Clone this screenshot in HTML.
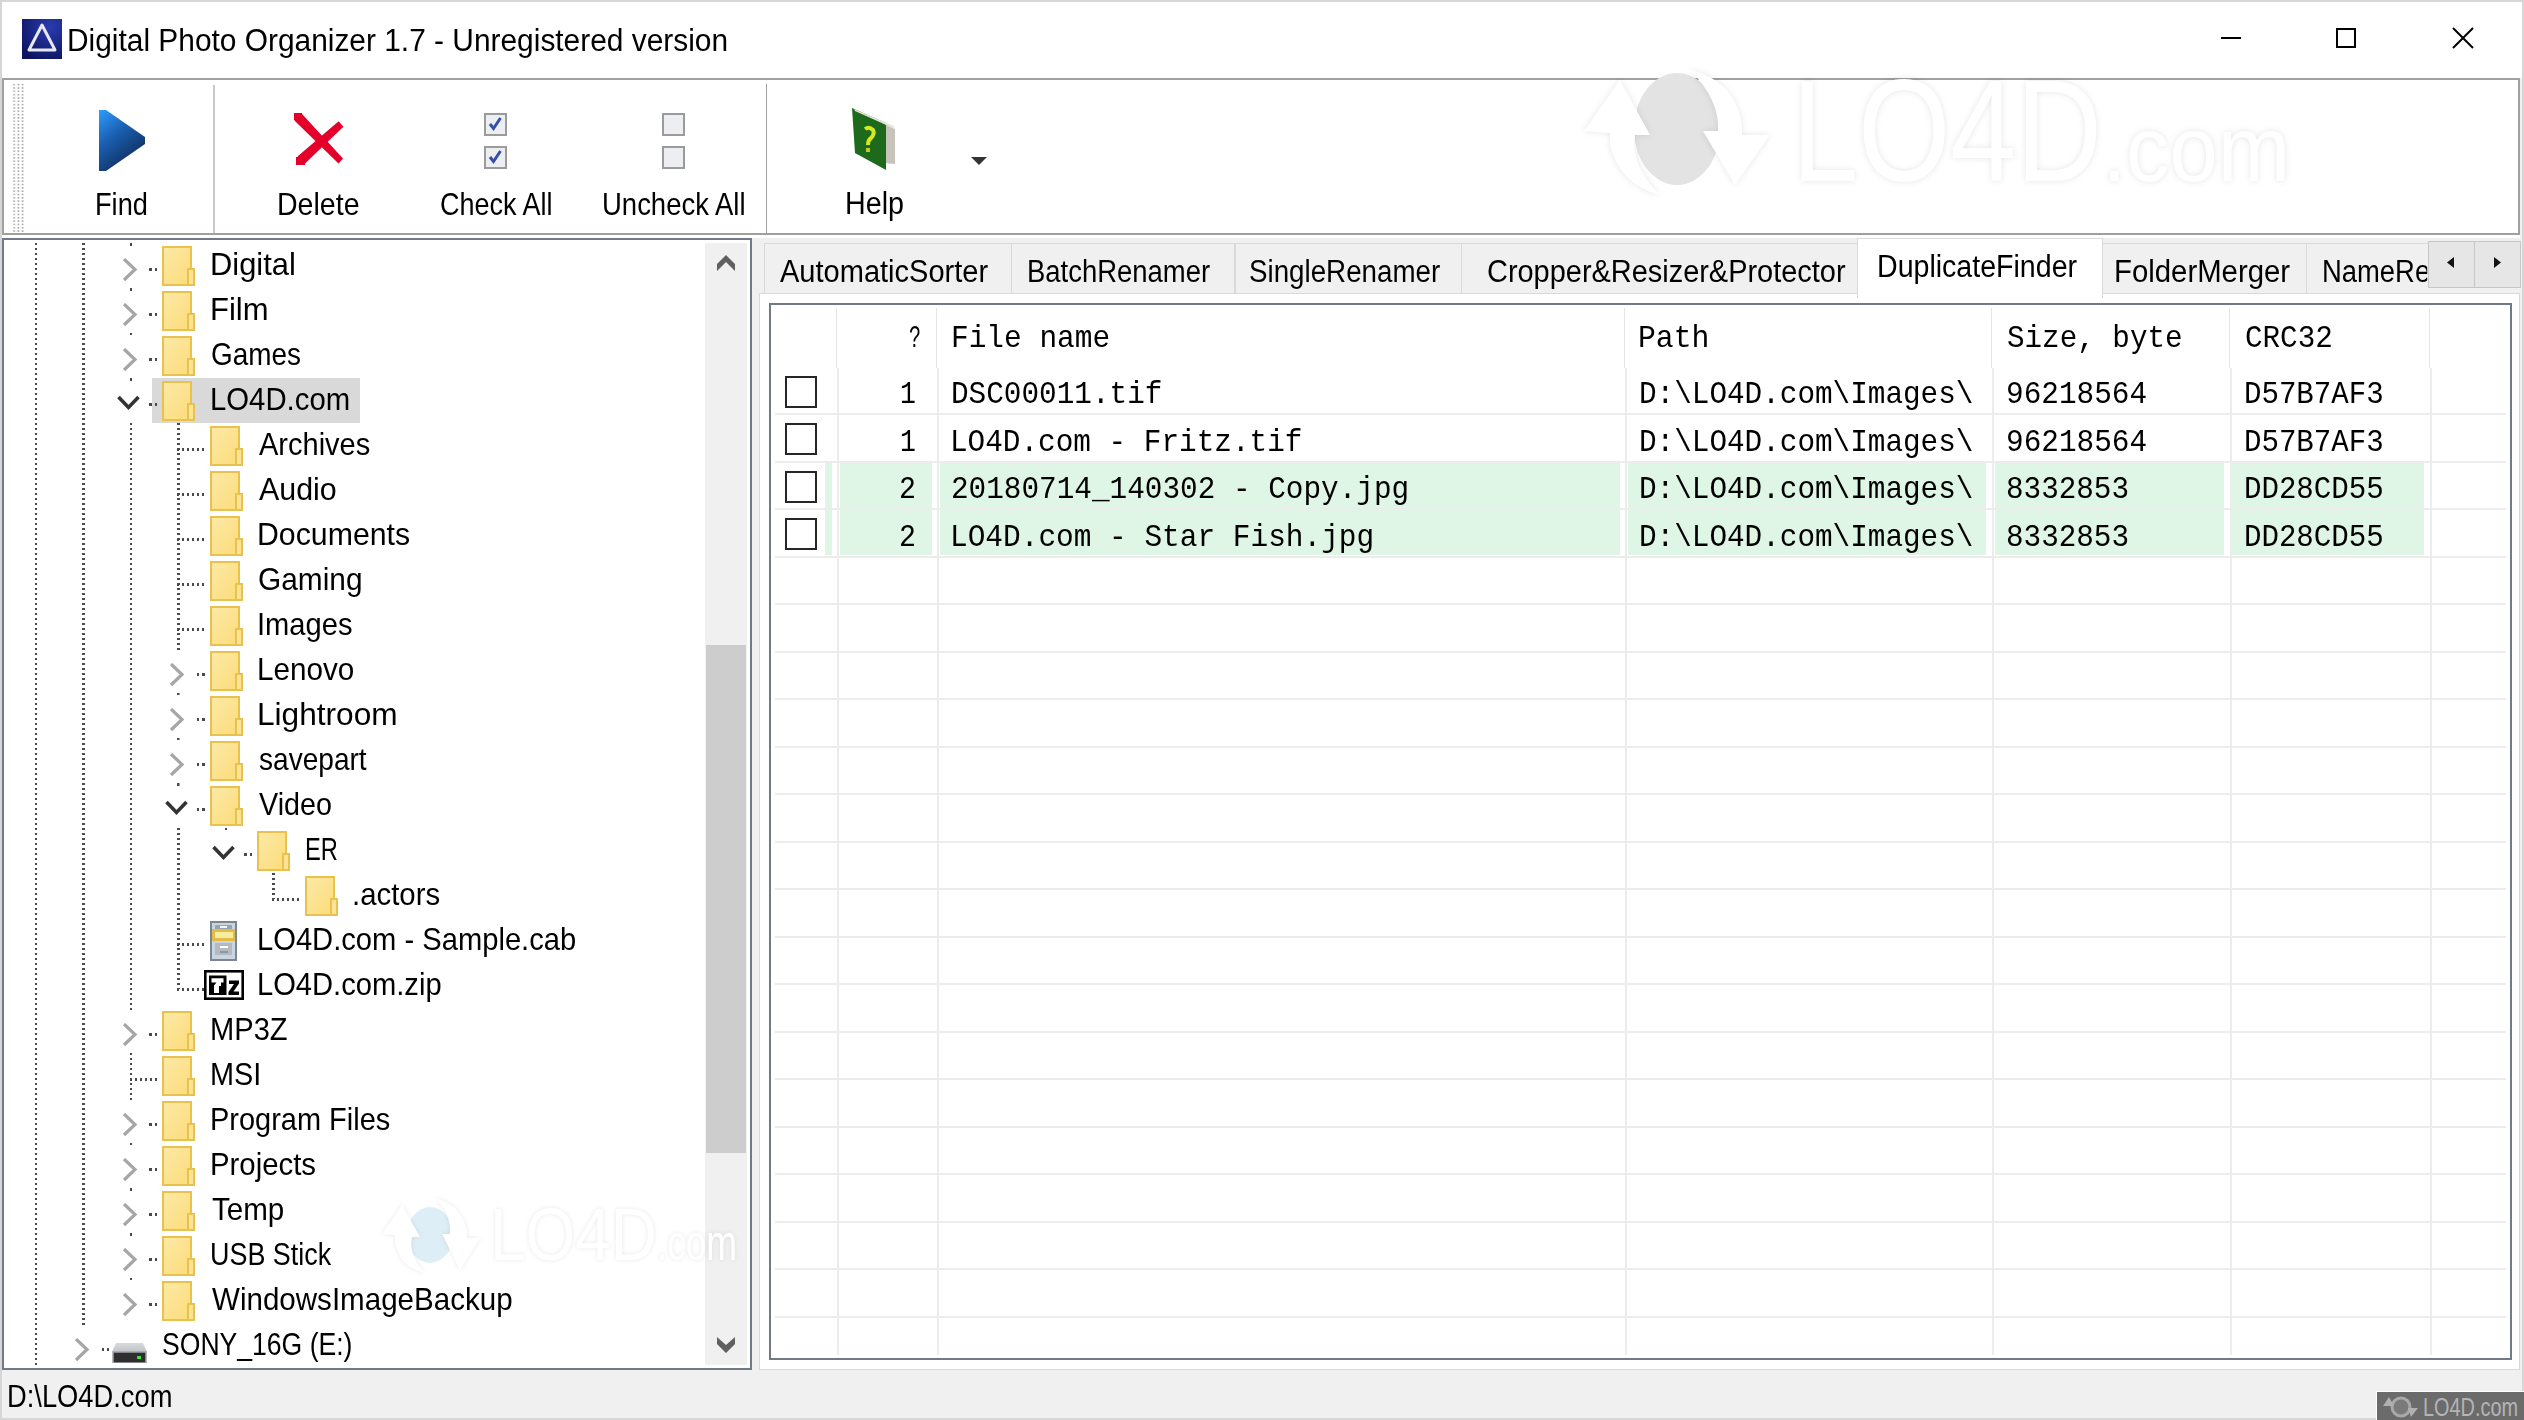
<!DOCTYPE html><html><head><meta charset="utf-8"><style>html,body{margin:0;padding:0;width:2524px;height:1420px;overflow:hidden;position:relative;background:#f0f0f0}div,svg{position:absolute}</style></head><body>
<div style="position:absolute;left:0px;top:0px;width:2524px;height:1420px;background:#f0f0f0"></div>
<div style="position:absolute;left:0px;top:0px;width:2524px;height:78px;background:#fff"></div>
<div style="position:absolute;left:0px;top:0px;width:2524px;height:2px;background:#d6d6d6"></div>
<div style="position:absolute;left:0px;top:0px;width:2px;height:1420px;background:#d6d6d6"></div>
<div style="position:absolute;left:2522px;top:0px;width:2px;height:1420px;background:#d6d6d6"></div>
<svg style="position:absolute;left:22px;top:19px" width="40" height="40" viewBox="0 0 40 40"><defs><radialGradient id="ig" cx="0.7" cy="0.2" r="0.9"><stop offset="0" stop-color="#2a3cb0"/><stop offset="1" stop-color="#0d1460"/></radialGradient></defs><rect x="0" y="0" width="40" height="40" fill="url(#ig)"/><path d="M20 6 L33 31 L7 31 Z" fill="none" stroke="#e8e8f4" stroke-width="3" stroke-linejoin="round"/></svg>
<div style="position:absolute;left:2221px;top:37px;width:20px;height:2px;background:#000"></div>
<div style="position:absolute;left:2336px;top:28px;width:20px;height:20px;border:2px solid #000;box-sizing:border-box"></div>
<svg style="position:absolute;left:2452px;top:27px" width="22" height="22" viewBox="0 0 22 22"><path d="M1 1 L21 21 M21 1 L1 21" stroke="#000" stroke-width="2"/></svg>
<div style="position:absolute;left:2px;top:78px;width:2518px;height:157px;background:#fff;border:2px solid #a0a0a0;box-sizing:border-box;border-right-color:#a0a0a0"></div>
<div style="position:absolute;left:12.3px;top:83.2px;width:12.75px;height:149px;background-image:radial-gradient(circle,#a6a6a6 0.6px,transparent 1.2px);background-size:4.25px 3.33px"></div>
<div style="position:absolute;left:213px;top:85px;width:2px;height:148px;background:#c8c8c8"></div>
<div style="position:absolute;left:766px;top:84px;width:1px;height:149px;background:#a0a0a0"></div>
<svg style="position:absolute;left:99px;top:110px" width="46" height="61" viewBox="0 0 46 61"><defs><linearGradient id="fg" x1="0" y1="0" x2="0.6" y2="1"><stop offset="0" stop-color="#2f9dff"/><stop offset="0.45" stop-color="#1a5fb0"/><stop offset="1" stop-color="#0f2a55"/></linearGradient></defs><path d="M0 0 L7 0 L46 27 L46 34 L7 61 L0 61 Z" fill="url(#fg)"/></svg>
<svg style="position:absolute;left:0px;top:0px;width:400px;height:200px" width="400" height="200" viewBox="0 0 400 200"><path d="M294.4 120.5 L301.6 113.5 L343 158.5 L338.5 163.5 Z" fill="#e5002b"/><path d="M338.6 121.3 L343.4 126.7 L304.5 164 L297.5 156.5 Z" fill="#e5002b"/><rect x="294" y="113" width="8" height="7" fill="#e5002b"/><rect x="296" y="157" width="9" height="8" fill="#e5002b"/></svg>
<svg style="position:absolute;left:484px;top:113px" width="23" height="23" viewBox="0 0 23 23"><rect x="1" y="1" width="21" height="21" fill="#eceef2" stroke="#9b9b9b" stroke-width="2"/><path d="M6 11 L9.5 15.5 L16.5 5" fill="none" stroke="#3352a4" stroke-width="3"/></svg>
<svg style="position:absolute;left:484px;top:145.5px" width="23" height="23" viewBox="0 0 23 23"><rect x="1" y="1" width="21" height="21" fill="#eceef2" stroke="#9b9b9b" stroke-width="2"/><path d="M6 11 L9.5 15.5 L16.5 5" fill="none" stroke="#3352a4" stroke-width="3"/></svg>
<svg style="position:absolute;left:661.5px;top:113px" width="23" height="23" viewBox="0 0 23 23"><rect x="1" y="1" width="21" height="21" fill="#eceef2" stroke="#9b9b9b" stroke-width="2"/></svg>
<svg style="position:absolute;left:661.5px;top:145.5px" width="23" height="23" viewBox="0 0 23 23"><rect x="1" y="1" width="21" height="21" fill="#eceef2" stroke="#9b9b9b" stroke-width="2"/></svg>
<svg style="position:absolute;left:852px;top:107px" width="44" height="64" viewBox="0 0 44 64"><path d="M32 16 L43 22 L43 57 L32 56 Z" fill="#c8c4bc"/><path d="M0 1 L34 16 L34 63 L3 46 Z" fill="#1d6a1d"/><path d="M2 2 L30 14 L42 19 L42 22 L32 17 L3 4 Z" fill="#e8e4da"/><path d="M13 22 Q17 19 21 23 Q23 27 19 31 Q16 33 16 38" fill="none" stroke="#d8e820" stroke-width="4"/><rect x="14" y="41" width="4" height="4" fill="#c0d020"/></svg>
<svg style="position:absolute;left:971px;top:157px" width="16" height="9" viewBox="0 0 16 9"><path d="M0 0 L16 0 L8 8 Z" fill="#333"/></svg>
<svg style="position:absolute;left:1570px;top:55px;z-index:1" width="740" height="160" viewBox="0 0 740 160"><ellipse cx="107" cy="74" rx="43" ry="56" fill="#e3e3e3"/><g style="filter:drop-shadow(0 0 3px rgba(0,0,0,0.10))" fill="#fff"><path d="M14 76 L50 25 L80 80 L65 80 Q60 110 90 140 Q50 130 40 90 L40 78 Z"/><path d="M200 80 L165 130 L133 76 L148 76 Q150 45 120 15 Q165 25 172 70 L172 80 Z"/><text x="222" y="126" font-family="Liberation Sans" font-size="144" textLength="310" lengthAdjust="spacingAndGlyphs">LO4D</text><text x="532" y="126" font-family="Liberation Sans" font-size="92" textLength="188" lengthAdjust="spacingAndGlyphs">.com</text></g></svg>
<div style="position:absolute;left:2px;top:235px;width:2518px;height:3px;background:#fff"></div>
<div style="position:absolute;left:2px;top:238px;width:750px;height:1132px;background:#fff;border:2px solid #727a87;box-sizing:border-box"></div>
<div style="position:absolute;left:705px;top:243px;width:42px;height:1122px;background:#f0f0f0"></div>
<div style="position:absolute;left:706px;top:645px;width:40px;height:508px;background:#cdcdcd"></div>
<svg style="position:absolute;left:716px;top:254px" width="20" height="18" viewBox="0 0 20 18"><path d="M1 10 L10 1 L19 10 L19 17 L10 8 L1 17 Z" fill="#606060"/></svg>
<svg style="position:absolute;left:716px;top:1336px" width="20" height="18" viewBox="0 0 20 18"><path d="M1 1 L10 9 L19 1 L19 8 L10 17 L1 8 Z" fill="#606060"/></svg>
<div style="position:absolute;left:152px;top:378px;width:207.5px;height:45px;background:#d9d9d9"></div>
<div style="position:absolute;left:34.50px;top:243px;width:2.5px;height:1123px;background-image:linear-gradient(#4a4a4a 2.5px,transparent 2.5px);background-size:2.5px 5px"></div>
<div style="position:absolute;left:82.20px;top:243px;width:2.5px;height:1083px;background-image:linear-gradient(#4a4a4a 2.5px,transparent 2.5px);background-size:2.5px 5px"></div>
<div style="position:absolute;left:129.50px;top:243px;width:2.5px;height:3px;background-image:linear-gradient(#4a4a4a 2.5px,transparent 2.5px);background-size:2.5px 5px"></div>
<div style="position:absolute;left:129.50px;top:288px;width:2.5px;height:3px;background-image:linear-gradient(#4a4a4a 2.5px,transparent 2.5px);background-size:2.5px 5px"></div>
<div style="position:absolute;left:129.50px;top:333px;width:2.5px;height:3px;background-image:linear-gradient(#4a4a4a 2.5px,transparent 2.5px);background-size:2.5px 5px"></div>
<div style="position:absolute;left:129.50px;top:378px;width:2.5px;height:3px;background-image:linear-gradient(#4a4a4a 2.5px,transparent 2.5px);background-size:2.5px 5px"></div>
<div style="position:absolute;left:129.50px;top:423px;width:2.5px;height:588px;background-image:linear-gradient(#4a4a4a 2.5px,transparent 2.5px);background-size:2.5px 5px"></div>
<div style="position:absolute;left:129.50px;top:1053px;width:2.5px;height:48px;background-image:linear-gradient(#4a4a4a 2.5px,transparent 2.5px);background-size:2.5px 5px"></div>
<div style="position:absolute;left:129.50px;top:1143px;width:2.5px;height:3px;background-image:linear-gradient(#4a4a4a 2.5px,transparent 2.5px);background-size:2.5px 5px"></div>
<div style="position:absolute;left:129.50px;top:1188px;width:2.5px;height:3px;background-image:linear-gradient(#4a4a4a 2.5px,transparent 2.5px);background-size:2.5px 5px"></div>
<div style="position:absolute;left:129.50px;top:1233px;width:2.5px;height:3px;background-image:linear-gradient(#4a4a4a 2.5px,transparent 2.5px);background-size:2.5px 5px"></div>
<div style="position:absolute;left:129.50px;top:1278px;width:2.5px;height:3px;background-image:linear-gradient(#4a4a4a 2.5px,transparent 2.5px);background-size:2.5px 5px"></div>
<div style="position:absolute;left:177.10px;top:423px;width:2.5px;height:228px;background-image:linear-gradient(#4a4a4a 2.5px,transparent 2.5px);background-size:2.5px 5px"></div>
<div style="position:absolute;left:177.10px;top:693px;width:2.5px;height:3px;background-image:linear-gradient(#4a4a4a 2.5px,transparent 2.5px);background-size:2.5px 5px"></div>
<div style="position:absolute;left:177.10px;top:738px;width:2.5px;height:3px;background-image:linear-gradient(#4a4a4a 2.5px,transparent 2.5px);background-size:2.5px 5px"></div>
<div style="position:absolute;left:177.10px;top:783px;width:2.5px;height:3px;background-image:linear-gradient(#4a4a4a 2.5px,transparent 2.5px);background-size:2.5px 5px"></div>
<div style="position:absolute;left:177.10px;top:828px;width:2.5px;height:161px;background-image:linear-gradient(#4a4a4a 2.5px,transparent 2.5px);background-size:2.5px 5px"></div>
<div style="position:absolute;left:224.70px;top:828px;width:2.5px;height:3px;background-image:linear-gradient(#4a4a4a 2.5px,transparent 2.5px);background-size:2.5px 5px"></div>
<div style="position:absolute;left:272.30px;top:873px;width:2.5px;height:26px;background-image:linear-gradient(#4a4a4a 2.5px,transparent 2.5px);background-size:2.5px 5px"></div>
<svg style="position:absolute;left:121.6px;top:257.5px" width="16" height="24" viewBox="0 0 16 24"><path d="M2 1 L13 11.5 L2 22" fill="none" stroke="#a6a6a6" stroke-width="3.2"/></svg>
<div style="position:absolute;left:149.25px;top:268.0px;width:2.5px;height:2.5px;background:#4a4a4a"></div>
<div style="position:absolute;left:154.55px;top:268.0px;width:2.5px;height:2.5px;background:#4a4a4a"></div>
<svg style="position:absolute;left:162.0px;top:245.5px" width="33" height="41" viewBox="0 0 33 41"><defs><linearGradient id="fy" x1="0" y1="0" x2="1" y2="1"><stop offset="0" stop-color="#fde9a8"/><stop offset="1" stop-color="#fcdc78"/></linearGradient></defs><rect x="1" y="1" width="28" height="38" fill="url(#fy)" stroke="#e9c24e" stroke-width="2"/><rect x="26" y="23" width="6" height="16" fill="#fde39a" stroke="#e9c24e" stroke-width="2"/></svg>
<svg style="position:absolute;left:121.6px;top:302.5px" width="16" height="24" viewBox="0 0 16 24"><path d="M2 1 L13 11.5 L2 22" fill="none" stroke="#a6a6a6" stroke-width="3.2"/></svg>
<div style="position:absolute;left:149.25px;top:313.0px;width:2.5px;height:2.5px;background:#4a4a4a"></div>
<div style="position:absolute;left:154.55px;top:313.0px;width:2.5px;height:2.5px;background:#4a4a4a"></div>
<svg style="position:absolute;left:162.0px;top:290.5px" width="33" height="41" viewBox="0 0 33 41"><defs><linearGradient id="fy" x1="0" y1="0" x2="1" y2="1"><stop offset="0" stop-color="#fde9a8"/><stop offset="1" stop-color="#fcdc78"/></linearGradient></defs><rect x="1" y="1" width="28" height="38" fill="url(#fy)" stroke="#e9c24e" stroke-width="2"/><rect x="26" y="23" width="6" height="16" fill="#fde39a" stroke="#e9c24e" stroke-width="2"/></svg>
<svg style="position:absolute;left:121.6px;top:347.5px" width="16" height="24" viewBox="0 0 16 24"><path d="M2 1 L13 11.5 L2 22" fill="none" stroke="#a6a6a6" stroke-width="3.2"/></svg>
<div style="position:absolute;left:149.25px;top:358.0px;width:2.5px;height:2.5px;background:#4a4a4a"></div>
<div style="position:absolute;left:154.55px;top:358.0px;width:2.5px;height:2.5px;background:#4a4a4a"></div>
<svg style="position:absolute;left:162.0px;top:335.5px" width="33" height="41" viewBox="0 0 33 41"><defs><linearGradient id="fy" x1="0" y1="0" x2="1" y2="1"><stop offset="0" stop-color="#fde9a8"/><stop offset="1" stop-color="#fcdc78"/></linearGradient></defs><rect x="1" y="1" width="28" height="38" fill="url(#fy)" stroke="#e9c24e" stroke-width="2"/><rect x="26" y="23" width="6" height="16" fill="#fde39a" stroke="#e9c24e" stroke-width="2"/></svg>
<svg style="position:absolute;left:116.9px;top:395.0px" width="23" height="16" viewBox="0 0 23 16"><path d="M1.5 2 L11.5 12.5 L21.5 2" fill="none" stroke="#333" stroke-width="3.6"/></svg>
<div style="position:absolute;left:149.25px;top:403.0px;width:2.5px;height:2.5px;background:#4a4a4a"></div>
<div style="position:absolute;left:154.55px;top:403.0px;width:2.5px;height:2.5px;background:#4a4a4a"></div>
<svg style="position:absolute;left:162.0px;top:380.5px" width="33" height="41" viewBox="0 0 33 41"><defs><linearGradient id="fy" x1="0" y1="0" x2="1" y2="1"><stop offset="0" stop-color="#fde9a8"/><stop offset="1" stop-color="#fcdc78"/></linearGradient></defs><rect x="1" y="1" width="28" height="38" fill="url(#fy)" stroke="#e9c24e" stroke-width="2"/><rect x="26" y="23" width="6" height="16" fill="#fde39a" stroke="#e9c24e" stroke-width="2"/></svg>
<div style="position:absolute;left:177.10px;top:448.00px;width:27.5px;height:2.5px;background-image:linear-gradient(to right,#4a4a4a 2.5px,transparent 2.5px);background-size:5px 2.5px"></div>
<svg style="position:absolute;left:209.6px;top:425.5px" width="33" height="41" viewBox="0 0 33 41"><defs><linearGradient id="fy" x1="0" y1="0" x2="1" y2="1"><stop offset="0" stop-color="#fde9a8"/><stop offset="1" stop-color="#fcdc78"/></linearGradient></defs><rect x="1" y="1" width="28" height="38" fill="url(#fy)" stroke="#e9c24e" stroke-width="2"/><rect x="26" y="23" width="6" height="16" fill="#fde39a" stroke="#e9c24e" stroke-width="2"/></svg>
<div style="position:absolute;left:177.10px;top:493.00px;width:27.5px;height:2.5px;background-image:linear-gradient(to right,#4a4a4a 2.5px,transparent 2.5px);background-size:5px 2.5px"></div>
<svg style="position:absolute;left:209.6px;top:470.5px" width="33" height="41" viewBox="0 0 33 41"><defs><linearGradient id="fy" x1="0" y1="0" x2="1" y2="1"><stop offset="0" stop-color="#fde9a8"/><stop offset="1" stop-color="#fcdc78"/></linearGradient></defs><rect x="1" y="1" width="28" height="38" fill="url(#fy)" stroke="#e9c24e" stroke-width="2"/><rect x="26" y="23" width="6" height="16" fill="#fde39a" stroke="#e9c24e" stroke-width="2"/></svg>
<div style="position:absolute;left:177.10px;top:538.00px;width:27.5px;height:2.5px;background-image:linear-gradient(to right,#4a4a4a 2.5px,transparent 2.5px);background-size:5px 2.5px"></div>
<svg style="position:absolute;left:209.6px;top:515.5px" width="33" height="41" viewBox="0 0 33 41"><defs><linearGradient id="fy" x1="0" y1="0" x2="1" y2="1"><stop offset="0" stop-color="#fde9a8"/><stop offset="1" stop-color="#fcdc78"/></linearGradient></defs><rect x="1" y="1" width="28" height="38" fill="url(#fy)" stroke="#e9c24e" stroke-width="2"/><rect x="26" y="23" width="6" height="16" fill="#fde39a" stroke="#e9c24e" stroke-width="2"/></svg>
<div style="position:absolute;left:177.10px;top:583.00px;width:27.5px;height:2.5px;background-image:linear-gradient(to right,#4a4a4a 2.5px,transparent 2.5px);background-size:5px 2.5px"></div>
<svg style="position:absolute;left:209.6px;top:560.5px" width="33" height="41" viewBox="0 0 33 41"><defs><linearGradient id="fy" x1="0" y1="0" x2="1" y2="1"><stop offset="0" stop-color="#fde9a8"/><stop offset="1" stop-color="#fcdc78"/></linearGradient></defs><rect x="1" y="1" width="28" height="38" fill="url(#fy)" stroke="#e9c24e" stroke-width="2"/><rect x="26" y="23" width="6" height="16" fill="#fde39a" stroke="#e9c24e" stroke-width="2"/></svg>
<div style="position:absolute;left:177.10px;top:628.00px;width:27.5px;height:2.5px;background-image:linear-gradient(to right,#4a4a4a 2.5px,transparent 2.5px);background-size:5px 2.5px"></div>
<svg style="position:absolute;left:209.6px;top:605.5px" width="33" height="41" viewBox="0 0 33 41"><defs><linearGradient id="fy" x1="0" y1="0" x2="1" y2="1"><stop offset="0" stop-color="#fde9a8"/><stop offset="1" stop-color="#fcdc78"/></linearGradient></defs><rect x="1" y="1" width="28" height="38" fill="url(#fy)" stroke="#e9c24e" stroke-width="2"/><rect x="26" y="23" width="6" height="16" fill="#fde39a" stroke="#e9c24e" stroke-width="2"/></svg>
<svg style="position:absolute;left:169.2px;top:662.5px" width="16" height="24" viewBox="0 0 16 24"><path d="M2 1 L13 11.5 L2 22" fill="none" stroke="#a6a6a6" stroke-width="3.2"/></svg>
<div style="position:absolute;left:196.85px;top:673.0px;width:2.5px;height:2.5px;background:#4a4a4a"></div>
<div style="position:absolute;left:202.15px;top:673.0px;width:2.5px;height:2.5px;background:#4a4a4a"></div>
<svg style="position:absolute;left:209.6px;top:650.5px" width="33" height="41" viewBox="0 0 33 41"><defs><linearGradient id="fy" x1="0" y1="0" x2="1" y2="1"><stop offset="0" stop-color="#fde9a8"/><stop offset="1" stop-color="#fcdc78"/></linearGradient></defs><rect x="1" y="1" width="28" height="38" fill="url(#fy)" stroke="#e9c24e" stroke-width="2"/><rect x="26" y="23" width="6" height="16" fill="#fde39a" stroke="#e9c24e" stroke-width="2"/></svg>
<svg style="position:absolute;left:169.2px;top:707.5px" width="16" height="24" viewBox="0 0 16 24"><path d="M2 1 L13 11.5 L2 22" fill="none" stroke="#a6a6a6" stroke-width="3.2"/></svg>
<div style="position:absolute;left:196.85px;top:718.0px;width:2.5px;height:2.5px;background:#4a4a4a"></div>
<div style="position:absolute;left:202.15px;top:718.0px;width:2.5px;height:2.5px;background:#4a4a4a"></div>
<svg style="position:absolute;left:209.6px;top:695.5px" width="33" height="41" viewBox="0 0 33 41"><defs><linearGradient id="fy" x1="0" y1="0" x2="1" y2="1"><stop offset="0" stop-color="#fde9a8"/><stop offset="1" stop-color="#fcdc78"/></linearGradient></defs><rect x="1" y="1" width="28" height="38" fill="url(#fy)" stroke="#e9c24e" stroke-width="2"/><rect x="26" y="23" width="6" height="16" fill="#fde39a" stroke="#e9c24e" stroke-width="2"/></svg>
<svg style="position:absolute;left:169.2px;top:752.5px" width="16" height="24" viewBox="0 0 16 24"><path d="M2 1 L13 11.5 L2 22" fill="none" stroke="#a6a6a6" stroke-width="3.2"/></svg>
<div style="position:absolute;left:196.85px;top:763.0px;width:2.5px;height:2.5px;background:#4a4a4a"></div>
<div style="position:absolute;left:202.15px;top:763.0px;width:2.5px;height:2.5px;background:#4a4a4a"></div>
<svg style="position:absolute;left:209.6px;top:740.5px" width="33" height="41" viewBox="0 0 33 41"><defs><linearGradient id="fy" x1="0" y1="0" x2="1" y2="1"><stop offset="0" stop-color="#fde9a8"/><stop offset="1" stop-color="#fcdc78"/></linearGradient></defs><rect x="1" y="1" width="28" height="38" fill="url(#fy)" stroke="#e9c24e" stroke-width="2"/><rect x="26" y="23" width="6" height="16" fill="#fde39a" stroke="#e9c24e" stroke-width="2"/></svg>
<svg style="position:absolute;left:164.5px;top:800.0px" width="23" height="16" viewBox="0 0 23 16"><path d="M1.5 2 L11.5 12.5 L21.5 2" fill="none" stroke="#333" stroke-width="3.6"/></svg>
<div style="position:absolute;left:196.85px;top:808.0px;width:2.5px;height:2.5px;background:#4a4a4a"></div>
<div style="position:absolute;left:202.15px;top:808.0px;width:2.5px;height:2.5px;background:#4a4a4a"></div>
<svg style="position:absolute;left:209.6px;top:785.5px" width="33" height="41" viewBox="0 0 33 41"><defs><linearGradient id="fy" x1="0" y1="0" x2="1" y2="1"><stop offset="0" stop-color="#fde9a8"/><stop offset="1" stop-color="#fcdc78"/></linearGradient></defs><rect x="1" y="1" width="28" height="38" fill="url(#fy)" stroke="#e9c24e" stroke-width="2"/><rect x="26" y="23" width="6" height="16" fill="#fde39a" stroke="#e9c24e" stroke-width="2"/></svg>
<svg style="position:absolute;left:212.1px;top:845.0px" width="23" height="16" viewBox="0 0 23 16"><path d="M1.5 2 L11.5 12.5 L21.5 2" fill="none" stroke="#333" stroke-width="3.6"/></svg>
<div style="position:absolute;left:244.45px;top:853.0px;width:2.5px;height:2.5px;background:#4a4a4a"></div>
<div style="position:absolute;left:249.75px;top:853.0px;width:2.5px;height:2.5px;background:#4a4a4a"></div>
<svg style="position:absolute;left:257.2px;top:830.5px" width="33" height="41" viewBox="0 0 33 41"><defs><linearGradient id="fy" x1="0" y1="0" x2="1" y2="1"><stop offset="0" stop-color="#fde9a8"/><stop offset="1" stop-color="#fcdc78"/></linearGradient></defs><rect x="1" y="1" width="28" height="38" fill="url(#fy)" stroke="#e9c24e" stroke-width="2"/><rect x="26" y="23" width="6" height="16" fill="#fde39a" stroke="#e9c24e" stroke-width="2"/></svg>
<div style="position:absolute;left:272.30px;top:898.00px;width:27.5px;height:2.5px;background-image:linear-gradient(to right,#4a4a4a 2.5px,transparent 2.5px);background-size:5px 2.5px"></div>
<svg style="position:absolute;left:304.8px;top:875.5px" width="33" height="41" viewBox="0 0 33 41"><defs><linearGradient id="fy" x1="0" y1="0" x2="1" y2="1"><stop offset="0" stop-color="#fde9a8"/><stop offset="1" stop-color="#fcdc78"/></linearGradient></defs><rect x="1" y="1" width="28" height="38" fill="url(#fy)" stroke="#e9c24e" stroke-width="2"/><rect x="26" y="23" width="6" height="16" fill="#fde39a" stroke="#e9c24e" stroke-width="2"/></svg>
<div style="position:absolute;left:177.10px;top:943.00px;width:27.5px;height:2.5px;background-image:linear-gradient(to right,#4a4a4a 2.5px,transparent 2.5px);background-size:5px 2.5px"></div>
<svg style="position:absolute;left:209.6px;top:920.5px" width="28" height="40" viewBox="0 0 28 40"><rect x="1" y="1" width="25" height="38" fill="#c9d5e0" stroke="#7c8692" stroke-width="2"/><rect x="5" y="4" width="17" height="4" fill="#9ca4ae"/><rect x="10" y="5" width="7" height="2" fill="#f4f4f4"/><rect x="2" y="8" width="23" height="12" fill="#e2bc48"/><rect x="5" y="11" width="18" height="6" fill="#f6ee9c"/><rect x="5" y="22" width="17" height="12" fill="#b4bac2"/><rect x="10" y="25" width="8" height="2" fill="#fff"/><rect x="10" y="30" width="8" height="2" fill="#8c949c"/></svg>
<div style="position:absolute;left:177.10px;top:988.00px;width:27.5px;height:2.5px;background-image:linear-gradient(to right,#4a4a4a 2.5px,transparent 2.5px);background-size:5px 2.5px"></div>
<svg style="position:absolute;left:204.4px;top:970.2px" width="40" height="30" viewBox="0 0 40 30"><rect x="1.3" y="1.3" width="37.4" height="27.4" fill="#fff" stroke="#000" stroke-width="2.6"/><rect x="5" y="5.5" width="17.5" height="19.5" fill="#000"/><path d="M7.5 8.3 L19.5 8.3 L19.5 12.5 L17 12.5 L17 16 L15 16 L15 23 L10 23 L10 15.5 L12.5 12.5 L7.5 12.5 Z" fill="#fff"/><path d="M25 10.5 L35 10.5 L35 13.5 L29.5 21.5 L35 21.5 L35 25 L24.5 25 L24.5 22 L30 14 L25 14 Z" fill="#000"/></svg>
<svg style="position:absolute;left:121.6px;top:1022.5px" width="16" height="24" viewBox="0 0 16 24"><path d="M2 1 L13 11.5 L2 22" fill="none" stroke="#a6a6a6" stroke-width="3.2"/></svg>
<div style="position:absolute;left:149.25px;top:1033.0px;width:2.5px;height:2.5px;background:#4a4a4a"></div>
<div style="position:absolute;left:154.55px;top:1033.0px;width:2.5px;height:2.5px;background:#4a4a4a"></div>
<svg style="position:absolute;left:162.0px;top:1010.5px" width="33" height="41" viewBox="0 0 33 41"><defs><linearGradient id="fy" x1="0" y1="0" x2="1" y2="1"><stop offset="0" stop-color="#fde9a8"/><stop offset="1" stop-color="#fcdc78"/></linearGradient></defs><rect x="1" y="1" width="28" height="38" fill="url(#fy)" stroke="#e9c24e" stroke-width="2"/><rect x="26" y="23" width="6" height="16" fill="#fde39a" stroke="#e9c24e" stroke-width="2"/></svg>
<div style="position:absolute;left:129.50px;top:1078.00px;width:27.5px;height:2.5px;background-image:linear-gradient(to right,#4a4a4a 2.5px,transparent 2.5px);background-size:5px 2.5px"></div>
<svg style="position:absolute;left:162.0px;top:1055.5px" width="33" height="41" viewBox="0 0 33 41"><defs><linearGradient id="fy" x1="0" y1="0" x2="1" y2="1"><stop offset="0" stop-color="#fde9a8"/><stop offset="1" stop-color="#fcdc78"/></linearGradient></defs><rect x="1" y="1" width="28" height="38" fill="url(#fy)" stroke="#e9c24e" stroke-width="2"/><rect x="26" y="23" width="6" height="16" fill="#fde39a" stroke="#e9c24e" stroke-width="2"/></svg>
<svg style="position:absolute;left:121.6px;top:1112.5px" width="16" height="24" viewBox="0 0 16 24"><path d="M2 1 L13 11.5 L2 22" fill="none" stroke="#a6a6a6" stroke-width="3.2"/></svg>
<div style="position:absolute;left:149.25px;top:1123.0px;width:2.5px;height:2.5px;background:#4a4a4a"></div>
<div style="position:absolute;left:154.55px;top:1123.0px;width:2.5px;height:2.5px;background:#4a4a4a"></div>
<svg style="position:absolute;left:162.0px;top:1100.5px" width="33" height="41" viewBox="0 0 33 41"><defs><linearGradient id="fy" x1="0" y1="0" x2="1" y2="1"><stop offset="0" stop-color="#fde9a8"/><stop offset="1" stop-color="#fcdc78"/></linearGradient></defs><rect x="1" y="1" width="28" height="38" fill="url(#fy)" stroke="#e9c24e" stroke-width="2"/><rect x="26" y="23" width="6" height="16" fill="#fde39a" stroke="#e9c24e" stroke-width="2"/></svg>
<svg style="position:absolute;left:121.6px;top:1157.5px" width="16" height="24" viewBox="0 0 16 24"><path d="M2 1 L13 11.5 L2 22" fill="none" stroke="#a6a6a6" stroke-width="3.2"/></svg>
<div style="position:absolute;left:149.25px;top:1168.0px;width:2.5px;height:2.5px;background:#4a4a4a"></div>
<div style="position:absolute;left:154.55px;top:1168.0px;width:2.5px;height:2.5px;background:#4a4a4a"></div>
<svg style="position:absolute;left:162.0px;top:1145.5px" width="33" height="41" viewBox="0 0 33 41"><defs><linearGradient id="fy" x1="0" y1="0" x2="1" y2="1"><stop offset="0" stop-color="#fde9a8"/><stop offset="1" stop-color="#fcdc78"/></linearGradient></defs><rect x="1" y="1" width="28" height="38" fill="url(#fy)" stroke="#e9c24e" stroke-width="2"/><rect x="26" y="23" width="6" height="16" fill="#fde39a" stroke="#e9c24e" stroke-width="2"/></svg>
<svg style="position:absolute;left:121.6px;top:1202.5px" width="16" height="24" viewBox="0 0 16 24"><path d="M2 1 L13 11.5 L2 22" fill="none" stroke="#a6a6a6" stroke-width="3.2"/></svg>
<div style="position:absolute;left:149.25px;top:1213.0px;width:2.5px;height:2.5px;background:#4a4a4a"></div>
<div style="position:absolute;left:154.55px;top:1213.0px;width:2.5px;height:2.5px;background:#4a4a4a"></div>
<svg style="position:absolute;left:162.0px;top:1190.5px" width="33" height="41" viewBox="0 0 33 41"><defs><linearGradient id="fy" x1="0" y1="0" x2="1" y2="1"><stop offset="0" stop-color="#fde9a8"/><stop offset="1" stop-color="#fcdc78"/></linearGradient></defs><rect x="1" y="1" width="28" height="38" fill="url(#fy)" stroke="#e9c24e" stroke-width="2"/><rect x="26" y="23" width="6" height="16" fill="#fde39a" stroke="#e9c24e" stroke-width="2"/></svg>
<svg style="position:absolute;left:121.6px;top:1247.5px" width="16" height="24" viewBox="0 0 16 24"><path d="M2 1 L13 11.5 L2 22" fill="none" stroke="#a6a6a6" stroke-width="3.2"/></svg>
<div style="position:absolute;left:149.25px;top:1258.0px;width:2.5px;height:2.5px;background:#4a4a4a"></div>
<div style="position:absolute;left:154.55px;top:1258.0px;width:2.5px;height:2.5px;background:#4a4a4a"></div>
<svg style="position:absolute;left:162.0px;top:1235.5px" width="33" height="41" viewBox="0 0 33 41"><defs><linearGradient id="fy" x1="0" y1="0" x2="1" y2="1"><stop offset="0" stop-color="#fde9a8"/><stop offset="1" stop-color="#fcdc78"/></linearGradient></defs><rect x="1" y="1" width="28" height="38" fill="url(#fy)" stroke="#e9c24e" stroke-width="2"/><rect x="26" y="23" width="6" height="16" fill="#fde39a" stroke="#e9c24e" stroke-width="2"/></svg>
<svg style="position:absolute;left:121.6px;top:1292.5px" width="16" height="24" viewBox="0 0 16 24"><path d="M2 1 L13 11.5 L2 22" fill="none" stroke="#a6a6a6" stroke-width="3.2"/></svg>
<div style="position:absolute;left:149.25px;top:1303.0px;width:2.5px;height:2.5px;background:#4a4a4a"></div>
<div style="position:absolute;left:154.55px;top:1303.0px;width:2.5px;height:2.5px;background:#4a4a4a"></div>
<svg style="position:absolute;left:162.0px;top:1280.5px" width="33" height="41" viewBox="0 0 33 41"><defs><linearGradient id="fy" x1="0" y1="0" x2="1" y2="1"><stop offset="0" stop-color="#fde9a8"/><stop offset="1" stop-color="#fcdc78"/></linearGradient></defs><rect x="1" y="1" width="28" height="38" fill="url(#fy)" stroke="#e9c24e" stroke-width="2"/><rect x="26" y="23" width="6" height="16" fill="#fde39a" stroke="#e9c24e" stroke-width="2"/></svg>
<svg style="position:absolute;left:74.0px;top:1337.5px" width="16" height="24" viewBox="0 0 16 24"><path d="M2 1 L13 11.5 L2 22" fill="none" stroke="#a6a6a6" stroke-width="3.2"/></svg>
<div style="position:absolute;left:101.65px;top:1348.0px;width:2.5px;height:2.5px;background:#4a4a4a"></div>
<div style="position:absolute;left:106.95px;top:1348.0px;width:2.5px;height:2.5px;background:#4a4a4a"></div>
<svg style="position:absolute;left:112px;top:1343.0px" width="35" height="20" viewBox="0 0 35 20"><defs><linearGradient id="dg" x1="0" y1="0" x2="0" y2="1"><stop offset="0" stop-color="#d8dadc"/><stop offset="1" stop-color="#c0c4c8"/></linearGradient></defs><path d="M4 0 L31 0 L35 9 L0 9 Z" fill="url(#dg)"/><rect x="1" y="9" width="33" height="11" fill="#2e2e2e" stroke="#a0a4a8" stroke-width="1.5"/><rect x="25" y="13" width="4" height="3" fill="#40e040"/></svg>
<svg style="position:absolute;left:370px;top:1190px;z-index:2" width="390" height="100" viewBox="0 0 390 100"><ellipse cx="60" cy="45" rx="23" ry="28" fill="#ddeef7"/><g style="filter:drop-shadow(0 0 2px rgba(0,0,0,0.09))" fill="#fff"><path d="M12 44 L32 15 L50 47 L42 47 Q38 65 55 83 Q30 78 25 52 L25 45 Z"/><path d="M110 48 L90 80 L72 44 L80 44 Q82 25 65 8 Q92 15 97 42 L97 48 Z"/><text x="120" y="70" font-family="Liberation Sans" font-size="75" textLength="167" lengthAdjust="spacingAndGlyphs">LO4D</text><text x="287" y="70" font-family="Liberation Sans" font-size="50" textLength="80" lengthAdjust="spacingAndGlyphs">.com</text></g></svg>
<div style="position:absolute;left:0px;top:1418px;width:2524px;height:2px;background:#d6d6d6"></div>
<div style="position:absolute;left:759px;top:293px;width:1761px;height:1077px;background:#fff;border:1px solid #d9d9d9;box-sizing:border-box"></div>
<div style="position:absolute;left:764.4px;top:243px;width:247.9px;height:51px;background:#f0f0f0;border:1px solid #d9d9d9;box-sizing:border-box"></div>
<div style="position:absolute;left:1011.3px;top:243px;width:224.2px;height:51px;background:#f0f0f0;border:1px solid #d9d9d9;box-sizing:border-box"></div>
<div style="position:absolute;left:1234.5px;top:243px;width:227.8px;height:51px;background:#f0f0f0;border:1px solid #d9d9d9;box-sizing:border-box"></div>
<div style="position:absolute;left:1461.3px;top:243px;width:397.0px;height:51px;background:#f0f0f0;border:1px solid #d9d9d9;box-sizing:border-box"></div>
<div style="position:absolute;left:2102.4px;top:243px;width:204.9000000000001px;height:51px;background:#f0f0f0;border:1px solid #d9d9d9;box-sizing:border-box"></div>
<div style="position:absolute;left:2306.3px;top:243px;width:123.69999999999982px;height:51px;background:#f0f0f0;border:1px solid #d9d9d9;box-sizing:border-box;border-right:none"></div>
<div style="position:absolute;left:1857.3px;top:238px;width:245.70000000000005px;height:60px;background:#fff;border:1px solid #d9d9d9;border-bottom:none;box-sizing:border-box"></div>
<div style="position:absolute;left:2428px;top:241px;width:47px;height:47px;background:#e6e6e6;border:1px solid #c6c6c6;box-sizing:border-box;z-index:8"></div>
<div style="position:absolute;left:2474px;top:241px;width:47px;height:47px;background:#e6e6e6;border:1px solid #c6c6c6;box-sizing:border-box;z-index:8"></div>
<svg style="position:absolute;left:2447px;top:257px;z-index:9" width="8" height="11" viewBox="0 0 8 11"><path d="M7 0 L0 5.5 L7 11 Z" fill="#111"/></svg>
<svg style="position:absolute;left:2493px;top:257px;z-index:9" width="8" height="11" viewBox="0 0 8 11"><path d="M1 0 L8 5.5 L1 11 Z" fill="#111"/></svg>
<div style="position:absolute;left:769px;top:303px;width:1743px;height:1057px;background:#fff;border:2px solid #727a87;box-sizing:border-box"></div>
<div style="position:absolute;left:836px;top:308px;width:1px;height:60px;background:#e4e4e4"></div>
<div style="position:absolute;left:936px;top:308px;width:1px;height:60px;background:#e4e4e4"></div>
<div style="position:absolute;left:1624px;top:308px;width:1px;height:60px;background:#e4e4e4"></div>
<div style="position:absolute;left:1991px;top:308px;width:1px;height:60px;background:#e4e4e4"></div>
<div style="position:absolute;left:2229px;top:308px;width:1px;height:60px;background:#e4e4e4"></div>
<div style="position:absolute;left:2429px;top:308px;width:1px;height:60px;background:#e4e4e4"></div>
<div style="position:absolute;left:837px;top:368px;width:2px;height:987px;background:#ececec"></div>
<div style="position:absolute;left:937px;top:368px;width:2px;height:987px;background:#ececec"></div>
<div style="position:absolute;left:1625px;top:368px;width:2px;height:987px;background:#ececec"></div>
<div style="position:absolute;left:1992px;top:368px;width:2px;height:987px;background:#ececec"></div>
<div style="position:absolute;left:2230px;top:368px;width:2px;height:987px;background:#ececec"></div>
<div style="position:absolute;left:2430px;top:368px;width:2px;height:987px;background:#ececec"></div>
<div style="position:absolute;left:774.6px;top:413.0px;width:1731.4px;height:2px;background:#ececec"></div>
<div style="position:absolute;left:774.6px;top:460.5px;width:1731.4px;height:2px;background:#ececec"></div>
<div style="position:absolute;left:774.6px;top:508.0px;width:1731.4px;height:2px;background:#ececec"></div>
<div style="position:absolute;left:774.6px;top:555.5px;width:1731.4px;height:2px;background:#ececec"></div>
<div style="position:absolute;left:774.6px;top:603.0px;width:1731.4px;height:2px;background:#ececec"></div>
<div style="position:absolute;left:774.6px;top:650.5px;width:1731.4px;height:2px;background:#ececec"></div>
<div style="position:absolute;left:774.6px;top:698.0px;width:1731.4px;height:2px;background:#ececec"></div>
<div style="position:absolute;left:774.6px;top:745.5px;width:1731.4px;height:2px;background:#ececec"></div>
<div style="position:absolute;left:774.6px;top:793.0px;width:1731.4px;height:2px;background:#ececec"></div>
<div style="position:absolute;left:774.6px;top:840.5px;width:1731.4px;height:2px;background:#ececec"></div>
<div style="position:absolute;left:774.6px;top:888.0px;width:1731.4px;height:2px;background:#ececec"></div>
<div style="position:absolute;left:774.6px;top:935.5px;width:1731.4px;height:2px;background:#ececec"></div>
<div style="position:absolute;left:774.6px;top:983.0px;width:1731.4px;height:2px;background:#ececec"></div>
<div style="position:absolute;left:774.6px;top:1030.5px;width:1731.4px;height:2px;background:#ececec"></div>
<div style="position:absolute;left:774.6px;top:1078.0px;width:1731.4px;height:2px;background:#ececec"></div>
<div style="position:absolute;left:774.6px;top:1125.5px;width:1731.4px;height:2px;background:#ececec"></div>
<div style="position:absolute;left:774.6px;top:1173.0px;width:1731.4px;height:2px;background:#ececec"></div>
<div style="position:absolute;left:774.6px;top:1220.5px;width:1731.4px;height:2px;background:#ececec"></div>
<div style="position:absolute;left:774.6px;top:1268.0px;width:1731.4px;height:2px;background:#ececec"></div>
<div style="position:absolute;left:774.6px;top:1315.5px;width:1731.4px;height:2px;background:#ececec"></div>
<div style="position:absolute;left:825px;top:462.5px;width:7px;height:45.0px;background:#dff5e6"></div>
<div style="position:absolute;left:839.5px;top:462.5px;width:92.5px;height:45.0px;background:#dff5e6"></div>
<div style="position:absolute;left:939.5px;top:462.5px;width:680.0px;height:45.0px;background:#dff5e6"></div>
<div style="position:absolute;left:1627.5px;top:462.5px;width:358.7px;height:45.0px;background:#dff5e6"></div>
<div style="position:absolute;left:1994.6px;top:462.5px;width:229.8px;height:45.0px;background:#dff5e6"></div>
<div style="position:absolute;left:2232px;top:462.5px;width:192.4px;height:45.0px;background:#dff5e6"></div>
<div style="position:absolute;left:825px;top:510.0px;width:7px;height:45.0px;background:#dff5e6"></div>
<div style="position:absolute;left:839.5px;top:510.0px;width:92.5px;height:45.0px;background:#dff5e6"></div>
<div style="position:absolute;left:939.5px;top:510.0px;width:680.0px;height:45.0px;background:#dff5e6"></div>
<div style="position:absolute;left:1627.5px;top:510.0px;width:358.7px;height:45.0px;background:#dff5e6"></div>
<div style="position:absolute;left:1994.6px;top:510.0px;width:229.8px;height:45.0px;background:#dff5e6"></div>
<div style="position:absolute;left:2232px;top:510.0px;width:192.4px;height:45.0px;background:#dff5e6"></div>
<div style="position:absolute;left:785px;top:375.8px;width:32px;height:32px;border:2px solid #262626;box-sizing:border-box;background:#fff"></div>
<div style="position:absolute;left:785px;top:423.3px;width:32px;height:32px;border:2px solid #262626;box-sizing:border-box;background:#fff"></div>
<div style="position:absolute;left:785px;top:470.8px;width:32px;height:32px;border:2px solid #262626;box-sizing:border-box;background:#fff"></div>
<div style="position:absolute;left:785px;top:518.3px;width:32px;height:32px;border:2px solid #262626;box-sizing:border-box;background:#fff"></div>
<div style="position:absolute;left:2376px;top:1391px;width:148px;height:29px;background:#6b6b6b;border-top:1px solid #fff;border-left:1px solid #fff;box-sizing:border-box;z-index:20"></div>
<svg style="position:absolute;left:2380px;top:1393px;z-index:21" width="144" height="27" viewBox="0 0 144 27"><circle cx="21" cy="14" r="9" fill="#7a7a7a" stroke="#a8a8a8" stroke-width="3"/><path d="M3 13 L9 4 L14 13 Z M28 15 L38 15 L31 24 Z" fill="#b0b0b0"/><text x="43" y="22.5" font-family="Liberation Sans" font-size="26" fill="#b4b4b4" textLength="95" lengthAdjust="spacingAndGlyphs">LO4D.com</text></svg>
<div style="position:absolute;left:66.84px;top:25.38px;font-family:'Liberation Sans',monospace;font-size:30.43px;line-height:30.43px;white-space:pre;color:#000;transform:scaleX(0.9823);transform-origin:0 0;z-index:5;">Digital Photo Organizer 1.7 - Unregistered version</div>
<div style="position:absolute;left:95.47px;top:188.83px;font-family:'Liberation Sans',monospace;font-size:31.45px;line-height:31.45px;white-space:pre;color:#000;transform:scaleX(0.8652);transform-origin:0 0;z-index:5;">Find</div>
<div style="position:absolute;left:277.09px;top:189.00px;font-family:'Liberation Sans',monospace;font-size:31.59px;line-height:31.59px;white-space:pre;color:#000;transform:scaleX(0.9040);transform-origin:0 0;z-index:5;">Delete</div>
<div style="position:absolute;left:439.94px;top:189.00px;font-family:'Liberation Sans',monospace;font-size:31.59px;line-height:31.59px;white-space:pre;color:#000;transform:scaleX(0.8553);transform-origin:0 0;z-index:5;">Check All</div>
<div style="position:absolute;left:602.06px;top:189.00px;font-family:'Liberation Sans',monospace;font-size:31.59px;line-height:31.59px;white-space:pre;color:#000;transform:scaleX(0.8703);transform-origin:0 0;z-index:5;">Uncheck All</div>
<div style="position:absolute;left:845.00px;top:188.26px;font-family:'Liberation Sans',monospace;font-size:31.88px;line-height:31.88px;white-space:pre;color:#000;transform:scaleX(0.8993);transform-origin:0 0;z-index:5;">Help</div>
<div style="position:absolute;left:209.58px;top:248.11px;font-family:'Liberation Sans',monospace;font-size:32.17px;line-height:32.17px;white-space:pre;color:#000;transform:scaleX(0.9600);transform-origin:0 0;z-index:5;">Digital</div>
<div style="position:absolute;left:209.57px;top:293.11px;font-family:'Liberation Sans',monospace;font-size:32.17px;line-height:32.17px;white-space:pre;color:#000;transform:scaleX(0.9643);transform-origin:0 0;z-index:5;">Film</div>
<div style="position:absolute;left:210.63px;top:338.11px;font-family:'Liberation Sans',monospace;font-size:32.17px;line-height:32.17px;white-space:pre;color:#000;transform:scaleX(0.8684);transform-origin:0 0;z-index:5;">Games</div>
<div style="position:absolute;left:209.68px;top:383.11px;font-family:'Liberation Sans',monospace;font-size:32.17px;line-height:32.17px;white-space:pre;color:#000;transform:scaleX(0.9120);transform-origin:0 0;z-index:5;">LO4D.com</div>
<div style="position:absolute;left:259.10px;top:428.11px;font-family:'Liberation Sans',monospace;font-size:32.17px;line-height:32.17px;white-space:pre;color:#000;transform:scaleX(0.9024);transform-origin:0 0;z-index:5;">Archives</div>
<div style="position:absolute;left:259.10px;top:473.11px;font-family:'Liberation Sans',monospace;font-size:32.17px;line-height:32.17px;white-space:pre;color:#000;transform:scaleX(0.9452);transform-origin:0 0;z-index:5;">Audio</div>
<div style="position:absolute;left:257.22px;top:518.11px;font-family:'Liberation Sans',monospace;font-size:32.17px;line-height:32.17px;white-space:pre;color:#000;transform:scaleX(0.9414);transform-origin:0 0;z-index:5;">Documents</div>
<div style="position:absolute;left:258.17px;top:563.11px;font-family:'Liberation Sans',monospace;font-size:32.17px;line-height:32.17px;white-space:pre;color:#000;transform:scaleX(0.9279);transform-origin:0 0;z-index:5;">Gaming</div>
<div style="position:absolute;left:257.29px;top:608.11px;font-family:'Liberation Sans',monospace;font-size:32.17px;line-height:32.17px;white-space:pre;color:#000;transform:scaleX(0.9055);transform-origin:0 0;z-index:5;">Images</div>
<div style="position:absolute;left:257.25px;top:653.11px;font-family:'Liberation Sans',monospace;font-size:32.17px;line-height:32.17px;white-space:pre;color:#000;transform:scaleX(0.9229);transform-origin:0 0;z-index:5;">Lenovo</div>
<div style="position:absolute;left:257.13px;top:698.11px;font-family:'Liberation Sans',monospace;font-size:32.17px;line-height:32.17px;white-space:pre;color:#000;transform:scaleX(0.9834);transform-origin:0 0;z-index:5;">Lightroom</div>
<div style="position:absolute;left:259.10px;top:743.11px;font-family:'Liberation Sans',monospace;font-size:32.17px;line-height:32.17px;white-space:pre;color:#000;transform:scaleX(0.8728);transform-origin:0 0;z-index:5;">savepart</div>
<div style="position:absolute;left:259.10px;top:788.11px;font-family:'Liberation Sans',monospace;font-size:32.17px;line-height:32.17px;white-space:pre;color:#000;transform:scaleX(0.8926);transform-origin:0 0;z-index:5;">Video</div>
<div style="position:absolute;left:305.23px;top:833.11px;font-family:'Liberation Sans',monospace;font-size:32.17px;line-height:32.17px;white-space:pre;color:#000;transform:scaleX(0.7359);transform-origin:0 0;z-index:5;">ER</div>
<div style="position:absolute;left:352.47px;top:878.11px;font-family:'Liberation Sans',monospace;font-size:32.17px;line-height:32.17px;white-space:pre;color:#000;transform:scaleX(0.9131);transform-origin:0 0;z-index:5;">.actors</div>
<div style="position:absolute;left:257.29px;top:923.11px;font-family:'Liberation Sans',monospace;font-size:32.17px;line-height:32.17px;white-space:pre;color:#000;transform:scaleX(0.9067);transform-origin:0 0;z-index:5;">LO4D.com - Sample.cab</div>
<div style="position:absolute;left:257.29px;top:968.11px;font-family:'Liberation Sans',monospace;font-size:32.17px;line-height:32.17px;white-space:pre;color:#000;transform:scaleX(0.9062);transform-origin:0 0;z-index:5;">LO4D.com.zip</div>
<div style="position:absolute;left:209.69px;top:1013.11px;font-family:'Liberation Sans',monospace;font-size:32.17px;line-height:32.17px;white-space:pre;color:#000;transform:scaleX(0.9047);transform-origin:0 0;z-index:5;">MP3Z</div>
<div style="position:absolute;left:209.70px;top:1058.11px;font-family:'Liberation Sans',monospace;font-size:32.17px;line-height:32.17px;white-space:pre;color:#000;transform:scaleX(0.8979);transform-origin:0 0;z-index:5;">MSI</div>
<div style="position:absolute;left:209.70px;top:1103.11px;font-family:'Liberation Sans',monospace;font-size:32.17px;line-height:32.17px;white-space:pre;color:#000;transform:scaleX(0.9008);transform-origin:0 0;z-index:5;">Program Files</div>
<div style="position:absolute;left:209.67px;top:1148.11px;font-family:'Liberation Sans',monospace;font-size:32.17px;line-height:32.17px;white-space:pre;color:#000;transform:scaleX(0.9126);transform-origin:0 0;z-index:5;">Projects</div>
<div style="position:absolute;left:211.50px;top:1193.11px;font-family:'Liberation Sans',monospace;font-size:32.17px;line-height:32.17px;white-space:pre;color:#000;transform:scaleX(0.9197);transform-origin:0 0;z-index:5;">Temp</div>
<div style="position:absolute;left:209.83px;top:1238.11px;font-family:'Liberation Sans',monospace;font-size:32.17px;line-height:32.17px;white-space:pre;color:#000;transform:scaleX(0.8374);transform-origin:0 0;z-index:5;">USB Stick</div>
<div style="position:absolute;left:211.50px;top:1283.11px;font-family:'Liberation Sans',monospace;font-size:32.17px;line-height:32.17px;white-space:pre;color:#000;transform:scaleX(0.9191);transform-origin:0 0;z-index:5;">WindowsImageBackup</div>
<div style="position:absolute;left:161.77px;top:1328.11px;font-family:'Liberation Sans',monospace;font-size:32.17px;line-height:32.17px;white-space:pre;color:#000;transform:scaleX(0.8261);transform-origin:0 0;z-index:5;">SONY_16G (E:)</div>
<div style="position:absolute;left:7.34px;top:1381.39px;font-family:'Liberation Sans',monospace;font-size:31.01px;line-height:31.01px;white-space:pre;color:#000;transform:scaleX(0.8812);transform-origin:0 0;z-index:5;">D:\LO4D.com</div>
<div style="position:absolute;left:779.60px;top:256.39px;font-family:'Liberation Sans',monospace;font-size:31.01px;line-height:31.01px;white-space:pre;color:#000;transform:scaleX(0.9363);transform-origin:0 0;z-index:5;">AutomaticSorter</div>
<div style="position:absolute;left:1027.13px;top:256.39px;font-family:'Liberation Sans',monospace;font-size:31.01px;line-height:31.01px;white-space:pre;color:#000;transform:scaleX(0.8853);transform-origin:0 0;z-index:5;">BatchRenamer</div>
<div style="position:absolute;left:1249.41px;top:256.39px;font-family:'Liberation Sans',monospace;font-size:31.01px;line-height:31.01px;white-space:pre;color:#000;transform:scaleX(0.8948);transform-origin:0 0;z-index:5;">SingleRenamer</div>
<div style="position:absolute;left:1486.77px;top:256.39px;font-family:'Liberation Sans',monospace;font-size:31.01px;line-height:31.01px;white-space:pre;color:#000;transform:scaleX(0.9332);transform-origin:0 0;z-index:5;">Cropper&amp;Resizer&amp;Protector</div>
<div style="position:absolute;left:1877.41px;top:251.06px;font-family:'Liberation Sans',monospace;font-size:31.88px;line-height:31.88px;white-space:pre;color:#000;transform:scaleX(0.8961);transform-origin:0 0;z-index:5;">DuplicateFinder</div>
<div style="position:absolute;left:2114.21px;top:256.39px;font-family:'Liberation Sans',monospace;font-size:31.01px;line-height:31.01px;white-space:pre;color:#000;transform:scaleX(0.9465);transform-origin:0 0;z-index:5;">FolderMerger</div>
<div style="position:absolute;left:2322.43px;top:256.39px;font-family:'Liberation Sans',monospace;font-size:31.01px;line-height:31.01px;white-space:pre;color:#000;transform:scaleX(0.8840);transform-origin:0 0;z-index:5;width:118.9px;overflow:hidden;">NameRenamer</div>
<div style="position:absolute;left:908.57px;top:323.53px;font-family:'Liberation Mono',monospace;font-size:31.73px;line-height:31.73px;white-space:pre;color:#000;transform:scaleX(0.6312);transform-origin:0 0;z-index:5;">?</div>
<div style="position:absolute;left:950.71px;top:323.53px;font-family:'Liberation Mono',monospace;font-size:31.73px;line-height:31.73px;white-space:pre;color:#000;transform:scaleX(0.9292);transform-origin:0 0;z-index:5;">File name</div>
<div style="position:absolute;left:1638.42px;top:323.53px;font-family:'Liberation Mono',monospace;font-size:31.73px;line-height:31.73px;white-space:pre;color:#000;transform:scaleX(0.9389);transform-origin:0 0;z-index:5;">Path</div>
<div style="position:absolute;left:2007.08px;top:323.53px;font-family:'Liberation Mono',monospace;font-size:31.73px;line-height:31.73px;white-space:pre;color:#000;transform:scaleX(0.9225);transform-origin:0 0;z-index:5;">Size, byte</div>
<div style="position:absolute;left:2245.08px;top:323.53px;font-family:'Liberation Mono',monospace;font-size:31.73px;line-height:31.73px;white-space:pre;color:#000;transform:scaleX(0.9225);transform-origin:0 0;z-index:5;">CRC32</div>
<div style="position:absolute;left:899.59px;top:379.10px;font-family:'Liberation Mono',monospace;font-size:30.98px;line-height:30.98px;white-space:pre;color:#000;transform:scaleX(0.8563);transform-origin:0 0;z-index:5;">1</div>
<div style="position:absolute;left:951.10px;top:379.10px;font-family:'Liberation Mono',monospace;font-size:30.98px;line-height:30.98px;white-space:pre;color:#000;transform:scaleX(0.9479);transform-origin:0 0;z-index:5;">DSC00011.tif</div>
<div style="position:absolute;left:1638.61px;top:379.10px;font-family:'Liberation Mono',monospace;font-size:30.98px;line-height:30.98px;white-space:pre;color:#000;transform:scaleX(0.9470);transform-origin:0 0;z-index:5;">D:\LO4D.com\Images\</div>
<div style="position:absolute;left:2006.10px;top:379.10px;font-family:'Liberation Mono',monospace;font-size:30.98px;line-height:30.98px;white-space:pre;color:#000;transform:scaleX(0.9487);transform-origin:0 0;z-index:5;">96218564</div>
<div style="position:absolute;left:2244.12px;top:379.10px;font-family:'Liberation Mono',monospace;font-size:30.98px;line-height:30.98px;white-space:pre;color:#000;transform:scaleX(0.9394);transform-origin:0 0;z-index:5;">D57B7AF3</div>
<div style="position:absolute;left:899.59px;top:426.60px;font-family:'Liberation Mono',monospace;font-size:30.98px;line-height:30.98px;white-space:pre;color:#000;transform:scaleX(0.8563);transform-origin:0 0;z-index:5;">1</div>
<div style="position:absolute;left:950.16px;top:426.60px;font-family:'Liberation Mono',monospace;font-size:30.98px;line-height:30.98px;white-space:pre;color:#000;transform:scaleX(0.9482);transform-origin:0 0;z-index:5;">LO4D.com - Fritz.tif</div>
<div style="position:absolute;left:1638.61px;top:426.60px;font-family:'Liberation Mono',monospace;font-size:30.98px;line-height:30.98px;white-space:pre;color:#000;transform:scaleX(0.9470);transform-origin:0 0;z-index:5;">D:\LO4D.com\Images\</div>
<div style="position:absolute;left:2006.10px;top:426.60px;font-family:'Liberation Mono',monospace;font-size:30.98px;line-height:30.98px;white-space:pre;color:#000;transform:scaleX(0.9487);transform-origin:0 0;z-index:5;">96218564</div>
<div style="position:absolute;left:2244.12px;top:426.60px;font-family:'Liberation Mono',monospace;font-size:30.98px;line-height:30.98px;white-space:pre;color:#000;transform:scaleX(0.9394);transform-origin:0 0;z-index:5;">D57B7AF3</div>
<div style="position:absolute;left:899.47px;top:474.10px;font-family:'Liberation Mono',monospace;font-size:30.98px;line-height:30.98px;white-space:pre;color:#000;transform:scaleX(0.9133);transform-origin:0 0;z-index:5;">2</div>
<div style="position:absolute;left:951.10px;top:474.10px;font-family:'Liberation Mono',monospace;font-size:30.98px;line-height:30.98px;white-space:pre;color:#000;transform:scaleX(0.9482);transform-origin:0 0;z-index:5;">20180714_140302 - Copy.jpg</div>
<div style="position:absolute;left:1638.61px;top:474.10px;font-family:'Liberation Mono',monospace;font-size:30.98px;line-height:30.98px;white-space:pre;color:#000;transform:scaleX(0.9470);transform-origin:0 0;z-index:5;">D:\LO4D.com\Images\</div>
<div style="position:absolute;left:2006.11px;top:474.10px;font-family:'Liberation Mono',monospace;font-size:30.98px;line-height:30.98px;white-space:pre;color:#000;transform:scaleX(0.9454);transform-origin:0 0;z-index:5;">8332853</div>
<div style="position:absolute;left:2244.12px;top:474.10px;font-family:'Liberation Mono',monospace;font-size:30.98px;line-height:30.98px;white-space:pre;color:#000;transform:scaleX(0.9394);transform-origin:0 0;z-index:5;">DD28CD55</div>
<div style="position:absolute;left:899.47px;top:521.60px;font-family:'Liberation Mono',monospace;font-size:30.98px;line-height:30.98px;white-space:pre;color:#000;transform:scaleX(0.9133);transform-origin:0 0;z-index:5;">2</div>
<div style="position:absolute;left:950.15px;top:521.60px;font-family:'Liberation Mono',monospace;font-size:30.98px;line-height:30.98px;white-space:pre;color:#000;transform:scaleX(0.9511);transform-origin:0 0;z-index:5;">LO4D.com - Star Fish.jpg</div>
<div style="position:absolute;left:1638.61px;top:521.60px;font-family:'Liberation Mono',monospace;font-size:30.98px;line-height:30.98px;white-space:pre;color:#000;transform:scaleX(0.9470);transform-origin:0 0;z-index:5;">D:\LO4D.com\Images\</div>
<div style="position:absolute;left:2006.11px;top:521.60px;font-family:'Liberation Mono',monospace;font-size:30.98px;line-height:30.98px;white-space:pre;color:#000;transform:scaleX(0.9454);transform-origin:0 0;z-index:5;">8332853</div>
<div style="position:absolute;left:2244.12px;top:521.60px;font-family:'Liberation Mono',monospace;font-size:30.98px;line-height:30.98px;white-space:pre;color:#000;transform:scaleX(0.9394);transform-origin:0 0;z-index:5;">DD28CD55</div>
</body></html>
